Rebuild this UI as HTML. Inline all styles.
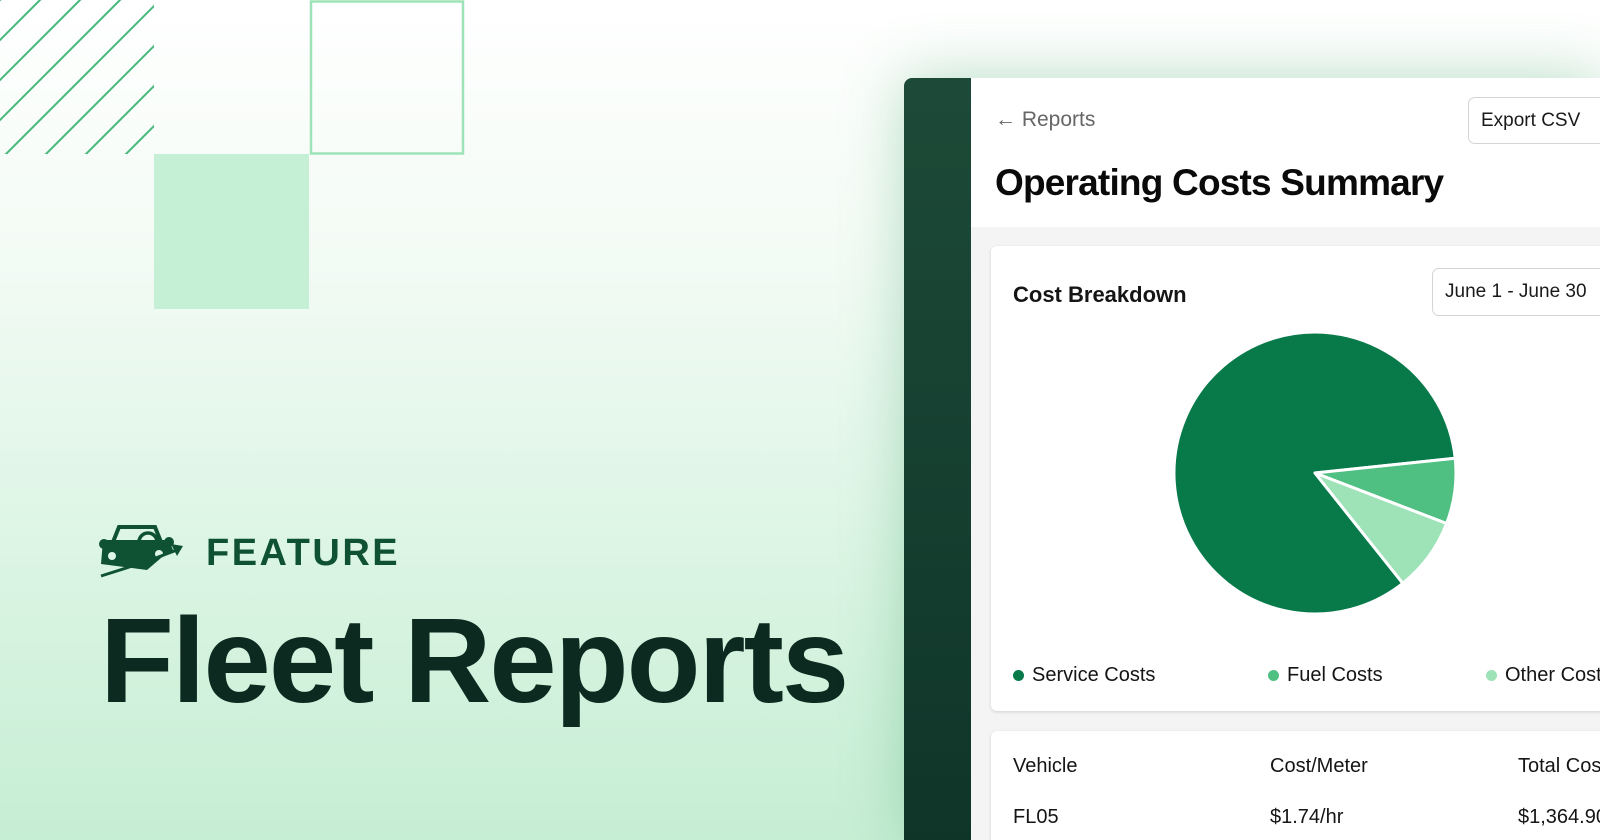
<!DOCTYPE html>
<html style="width:1600px;height:840px;overflow:hidden;background:#c6eed4"><head><meta charset="utf-8"><style>
*{margin:0;padding:0;box-sizing:border-box}
body{width:1600px;height:840px;overflow:hidden;position:relative;font-family:"Liberation Sans",sans-serif;background:linear-gradient(180deg,#ffffff 0%,#f3fbf5 30%,#dcf5e4 65%,#c6eed4 100%)}
.abs{position:absolute}
.panel{left:904px;top:78px;width:696px;height:762px;background:#f4f4f4;border-radius:8px 0 0 0;overflow:hidden;box-shadow:0 0 60px rgba(60,160,100,.35)}
.side{left:0;top:0;width:67px;height:100%;background:linear-gradient(180deg,#1d4a38,#0f3529)}
.hdr{left:67px;top:0;right:0;height:149px;background:#fff}
.card{background:#fff;border-radius:6px;box-shadow:0 1px 3px rgba(0,0,0,.15)}
.btn{border:1px solid #d4d4d4;border-radius:7px;background:#fff;font-size:19px;color:#1a1a1a;padding:0 12px;display:flex;align-items:center;white-space:nowrap}
.t{color:#151515;font-size:20px;white-space:nowrap}
</style></head><body>
<svg class="abs" style="left:0;top:0" width="470" height="320">
<defs><clipPath id="c"><rect x="0" y="0" width="154" height="154"/></clipPath></defs>
<g clip-path="url(#c)" stroke="#45b97a" stroke-width="2">
<line x1="-40" y1="40" x2="40" y2="-40"/><line x1="-40" y1="80" x2="80" y2="-40"/><line x1="-40" y1="120" x2="120" y2="-40"/><line x1="-40" y1="160" x2="160" y2="-40"/><line x1="0" y1="160" x2="200" y2="-40"/><line x1="40" y1="160" x2="240" y2="-40"/><line x1="80" y1="160" x2="280" y2="-40"/><line x1="120" y1="160" x2="320" y2="-40"/>
</g>
<rect x="154" y="154" width="155" height="155" fill="#c5f0d5"/>
<rect x="311" y="1.5" width="152" height="152" fill="none" stroke="#9de3b7" stroke-width="2.5"/>
</svg>
<svg class="abs" style="left:99px;top:524px" width="88" height="54" viewBox="0 0 88 54">
<path d="M14 18 L20 3 L56 3 L62 18" fill="none" stroke="#0f5133" stroke-width="4"/>
<path d="M40 18 a9 9 0 0 1 18 0" fill="none" stroke="#0f5133" stroke-width="3.5"/>
<path d="M4 16 L70 16 L74 26 L62 34 L48 46 L2 40 Z" fill="#0f5133"/>
<circle cx="5" cy="20" r="5" fill="#0f5133"/><circle cx="70" cy="18" r="5" fill="#0f5133"/>
<circle cx="13" cy="32" r="4" fill="#dff5e7"/><circle cx="60" cy="30" r="4" fill="#dff5e7"/>
<path d="M2 52 L46 38 L78 26" fill="none" stroke="#0f5133" stroke-width="3"/>
<path d="M72 20 L84 22 L78 32 Z" fill="#0f5133"/>
</svg>
<div class="abs" style="left:206px;top:532px;font-size:38px;font-weight:700;letter-spacing:2.5px;color:#0f5133">FEATURE</div>
<div class="abs" style="left:100px;top:600px;font-size:121px;font-weight:700;letter-spacing:-2px;color:#0c2a20;line-height:1;white-space:nowrap">Fleet Reports</div>

<div class="abs panel">
<div class="abs side"></div>
<div class="abs hdr">
<div class="abs" style="left:24px;top:30px;font-size:21px;color:#666">&#8592; Reports</div>
<div class="abs btn" style="left:497px;top:19px;height:47px;width:200px">Export CSV</div>
<div class="abs" style="left:24px;top:84px;font-size:37px;font-weight:700;color:#0a0a0a;letter-spacing:-0.8px">Operating Costs Summary</div>
</div>
<div class="abs card" style="left:87px;top:168px;width:700px;height:465px">
<div class="abs t" style="left:22px;top:36px;font-size:22px;font-weight:700">Cost Breakdown</div>
<div class="abs btn" style="left:441px;top:22px;height:48px;width:220px">June 1 - June 30</div>
<div class="abs t" style="left:22px;top:418px"><span style="display:inline-block;width:11px;height:11px;border-radius:50%;background:#087a4a;margin-right:8px"></span>Service Costs</div>
<div class="abs t" style="left:277px;top:418px"><span style="display:inline-block;width:11px;height:11px;border-radius:50%;background:#4fbf82;margin-right:8px"></span>Fuel Costs</div>
<div class="abs t" style="left:495px;top:418px"><span style="display:inline-block;width:11px;height:11px;border-radius:50%;background:#9de3b7;margin-right:8px"></span>Other Costs</div>
</div>
<div class="abs card" style="left:87px;top:653px;width:700px;height:200px">
<div class="abs t" style="left:22px;top:24px">Vehicle</div>
<div class="abs t" style="left:279px;top:24px">Cost/Meter</div>
<div class="abs t" style="left:527px;top:24px">Total Cost</div>
<div class="abs t" style="left:22px;top:75px">FL05</div>
<div class="abs t" style="left:279px;top:75px">$1.74/hr</div>
<div class="abs t" style="left:527px;top:75px">$1,364.90</div>
</div>
</div>
<svg class="abs" style="left:0;top:0" width="1600" height="840">
<g stroke="#fff" stroke-width="3" stroke-linejoin="round">
<path d="M1315 473 L1402.8 583.3 A141 141 0 1 1 1455.2 458.3 Z" fill="#087a4a"/>
<path d="M1315 473 L1455.2 458.3 A141 141 0 0 1 1446.6 523.5 Z" fill="#4fbf82"/>
<path d="M1315 473 L1446.6 523.5 A141 141 0 0 1 1402.8 583.3 Z" fill="#9de3b7"/>
</g>
</svg>
</body></html>
